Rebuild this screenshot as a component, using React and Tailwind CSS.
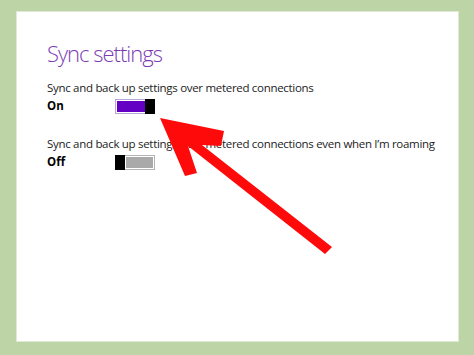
import React from "react";

function Toggle({ on }) {
  if (on) {
    return (
      <div className="flex h-[15px] w-[40px] items-stretch border border-[#b9a6d8] bg-white">
        <div className="my-[1px] ml-[1px] flex-1 bg-[#6400c4]" />
        <div className="-my-[1px] -mr-[1px] w-[10px] bg-black" />
      </div>
    );
  }
  return (
    <div className="flex h-[15px] w-[40px] items-stretch border border-[#b4b4b4] bg-white">
      <div className="-my-[1px] -ml-[1px] w-[10px] bg-black" />
      <div className="my-[1px] ml-[1px] mr-[1px] flex-1 bg-[#a9a9a9]" />
    </div>
  );
}

function Setting({ label, state, on }) {
  return (
    <div className="flex flex-col">
      <div className="whitespace-nowrap text-[11.5px] leading-[16px] tracking-[-0.3px] text-[#222]">{label}</div>
      <div className="mt-[2px] flex h-[16px] items-center">
        <div className="w-[68px] text-[11.5px] font-bold leading-[16px] text-black">{state}</div>
        <Toggle on={on} />
      </div>
    </div>
  );
}

export default function App() {
  return (
    <div
      className="relative h-[355px] w-[474px] overflow-hidden bg-[#bdd5a6] pb-[13px] pl-[16px] pr-[15px] pt-[11px]"
      style={{ fontFamily: '"Open Sans", "Noto Sans", sans-serif' }}
    >
      <div className="flex h-full w-full flex-col border border-[#dfe9d5] bg-white pl-[30px] pt-[26px]">
        <div className="text-[22px] font-light leading-[30px] tracking-[-1px] text-[#7b3bb4]">Sync settings</div>
        <div className="mt-[12px] flex flex-col gap-[22px]">
          <Setting
            label="Sync and back up settings over metered connections"
            state="On"
            on
          />
          <Setting
            label="Sync and back up settings over metered connections even when I’m roaming"
            state="Off"
          />
        </div>
      </div>
      <svg
        className="absolute left-0 top-0"
        width="474"
        height="355"
        viewBox="0 0 474 355"
      >
        <polygon
          fill="#ff0a0a"
          points="160,118 224,131 221,146 202,145 332,247 325,254 188,146 197,173 185,176"
        />
      </svg>
    </div>
  );
}
